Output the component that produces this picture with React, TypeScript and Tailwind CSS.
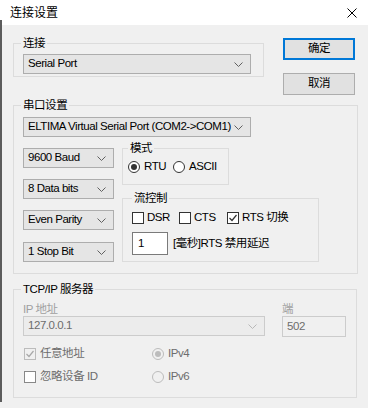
import React from "react";

const font = "font-['Liberation_Sans','Noto_Sans_CJK_SC',sans-serif]";

const Chevron = ({ color = "#606060" }: { color?: string }) => (
  <svg width="9" height="5" viewBox="0 0 9 5" className="shrink-0">
    <polyline points="0.5,0.5 4.5,4.5 8.5,0.5" fill="none" stroke={color} strokeWidth="1" />
  </svg>
);

const Combo = ({ text, width }: { text: string; width: string }) => (
  <div
    className={`${width} h-[20px] flex items-center justify-between border border-[#adadad] bg-[#e5e5e5] pl-[4px] pr-[7px] leading-none text-black whitespace-nowrap overflow-hidden`}
  >
    <span>{text}</span>
    <Chevron />
  </div>
);

const Radio = ({ on, disabled }: { on?: boolean; disabled?: boolean }) => (
  <span
    className={`w-[12px] h-[12px] rounded-full border flex items-center justify-center shrink-0 ${
      disabled ? "border-[#bcbcbc] bg-[#f0f0f0]" : "border-[#333] bg-white"
    }`}
  >
    {on && (
      <span className={`w-[6px] h-[6px] rounded-full ${disabled ? "bg-[#bcbcbc]" : "bg-[#333]"}`} />
    )}
  </span>
);

const Check = ({ on, tone = "dark" }: { on?: boolean; tone?: "dark" | "mid" | "off" }) => {
  const box =
    tone === "dark"
      ? "border-[#333] bg-white"
      : tone === "mid"
        ? "border-[#888] bg-white"
        : "border-[#bcbcbc] bg-[#f0f0f0]";
  return (
    <span className={`w-[12px] h-[12px] border flex items-center justify-center shrink-0 ${box}`}>
      {on && (
        <svg width="10" height="10" viewBox="0 0 10 10">
          <polyline
            points="1.5,5 4,7.5 8.5,2"
            fill="none"
            stroke={tone === "off" ? "#a8a8a8" : "#333"}
            strokeWidth="1.2"
          />
        </svg>
      )}
    </span>
  );
};

export default function App() {
  return (
    <div
      className={`${font} relative w-[368px] h-[408px] bg-[#f0f0f0] text-[11.5px] tracking-[-0.45px] text-black overflow-hidden`}
    >
      {/* window edge behind the dialog */}
      <div className="absolute left-0 top-[20px] w-[2px] h-[382px] bg-[#5c5c5c]" />

      {/* title bar */}
      <div className="h-[25px] bg-white flex items-center justify-between pl-[10px] pr-[11px]">
        <span className="text-[12px] tracking-normal leading-none">连接设置</span>
        <svg width="10" height="10" viewBox="0 0 10 10">
          <line x1="0.5" y1="0.5" x2="9.5" y2="9.5" stroke="#000" strokeWidth="1" />
          <line x1="9.5" y1="0.5" x2="0.5" y2="9.5" stroke="#000" strokeWidth="1" />
        </svg>
      </div>

      {/* connection + buttons */}
      <div className="flex items-start mt-[10px] ml-[13px]">
        <fieldset className="w-[251px] border border-[#dcdcdc] pl-[9px] pr-[12px] pt-[3px] pb-[2px]">
          <legend className="px-[2px] -ml-[2px] leading-[16px]">连接</legend>
          <Combo text="Serial Port" width="w-[228px]" />
        </fieldset>
        <div className="ml-[19px] mt-[3px] w-[72px] flex flex-col">
          <button className="h-[22px] border-2 border-[#0078d7] bg-[#e1e1e1] leading-none">确定</button>
          <button className="mt-[13px] h-[22px] border border-[#adadad] bg-[#e1e1e1] leading-none">取消</button>
        </div>
      </div>

      {/* serial settings */}
      <fieldset className="ml-[13px] mt-[2px] w-[345px] border border-[#dcdcdc] pl-[9px] pt-[4px] pb-[11px]">
        <legend className="px-[2px] -ml-[2px] leading-[16px]">串口设置</legend>
        <Combo text="ELTIMA Virtual Serial Port (COM2->COM1)" width="w-[228px]" />
        <div className="flex items-start mt-[3px]">
          <div className="w-[91px] mt-[8px] flex flex-col">
            <Combo text="9600 Baud" width="w-[91px]" />
            <div className="mt-[11px]">
              <Combo text="8 Data bits" width="w-[91px]" />
            </div>
            <div className="mt-[11px]">
              <Combo text="Even Parity" width="w-[91px]" />
            </div>
            <div className="mt-[12px]">
              <Combo text="1 Stop Bit" width="w-[91px]" />
            </div>
          </div>
          <div className="ml-[8px] flex flex-col">
            <fieldset className="w-[107px] border border-[#dcdcdc] pl-[5px] pt-[3px] pb-[9px]">
              <legend className="px-[2px] leading-[16px]">模式</legend>
              <div className="flex items-center h-[16px]">
                <Radio on />
                <span className="ml-[4px]">RTU</span>
                <span className="ml-[7px]">
                  <Radio />
                </span>
                <span className="ml-[4px]">ASCII</span>
              </div>
            </fieldset>
            <fieldset className="mt-[5px] w-[197px] border border-[#dcdcdc] pl-[9px] pt-[4px] pb-[6px]">
              <legend className="px-[2px] leading-[16px]">流控制</legend>
              <div className="flex items-center h-[16px]">
                <div className="w-[47px] flex items-center">
                  <Check />
                  <span className="ml-[3px]">DSR</span>
                </div>
                <div className="w-[48px] flex items-center">
                  <Check />
                  <span className="ml-[3px]">CTS</span>
                </div>
                <div className="flex items-center">
                  <Check on />
                  <span className="ml-[3px]">RTS 切换</span>
                </div>
              </div>
              <div className="flex items-center mt-[6px]">
                <div className="w-[36px] h-[23px] border border-[#7a7a7a] bg-white flex items-center pl-[5px]">
                  1
                </div>
                <span className="ml-[5px]">[毫秒]RTS 禁用延迟</span>
              </div>
            </fieldset>
          </div>
        </div>
      </fieldset>

      {/* TCP/IP server */}
      <fieldset className="ml-[13px] mt-[7px] w-[344px] border border-[#dcdcdc] pl-[9px] pt-[5px] pb-[12px]">
        <legend className="px-[2px] -ml-[2px] leading-[16px]">TCP/IP 服务器</legend>
        <div className="flex items-start">
          <div className="w-[242px]">
            <div className="leading-[14px] text-[#a0a0a0]">IP 地址</div>
            <div className="w-[242px] h-[20px] flex items-center justify-between border border-[#cccccc] bg-[#ececec] pl-[4px] pr-[7px] leading-none text-[#6d6d6d]">
              <span>127.0.0.1</span>
              <Chevron color="#b8b8b8" />
            </div>
          </div>
          <div className="ml-[17px] w-[64px]">
            <div className="leading-[14px] text-[#a0a0a0]">端</div>
            <div className="h-[21px] border border-[#cccccc] bg-[#f0f0f0] flex items-center pl-[4px] text-[#6d6d6d]">
              502
            </div>
          </div>
        </div>
        <div className="flex items-center h-[16px] mt-[9px] pl-[1px] text-[#6d6d6d]">
          <div className="w-[128px] flex items-center">
            <Check on tone="off" />
            <span className="ml-[4px]">任意地址</span>
          </div>
          <Radio on disabled />
          <span className="ml-[4px]">IPv4</span>
        </div>
        <div className="flex items-center h-[16px] mt-[7px] pl-[1px] text-[#6d6d6d]">
          <div className="w-[128px] flex items-center">
            <Check tone="mid" />
            <span className="ml-[4px]">忽略设备 ID</span>
          </div>
          <Radio disabled />
          <span className="ml-[4px]">IPv6</span>
        </div>
      </fieldset>
    </div>
  );
}
